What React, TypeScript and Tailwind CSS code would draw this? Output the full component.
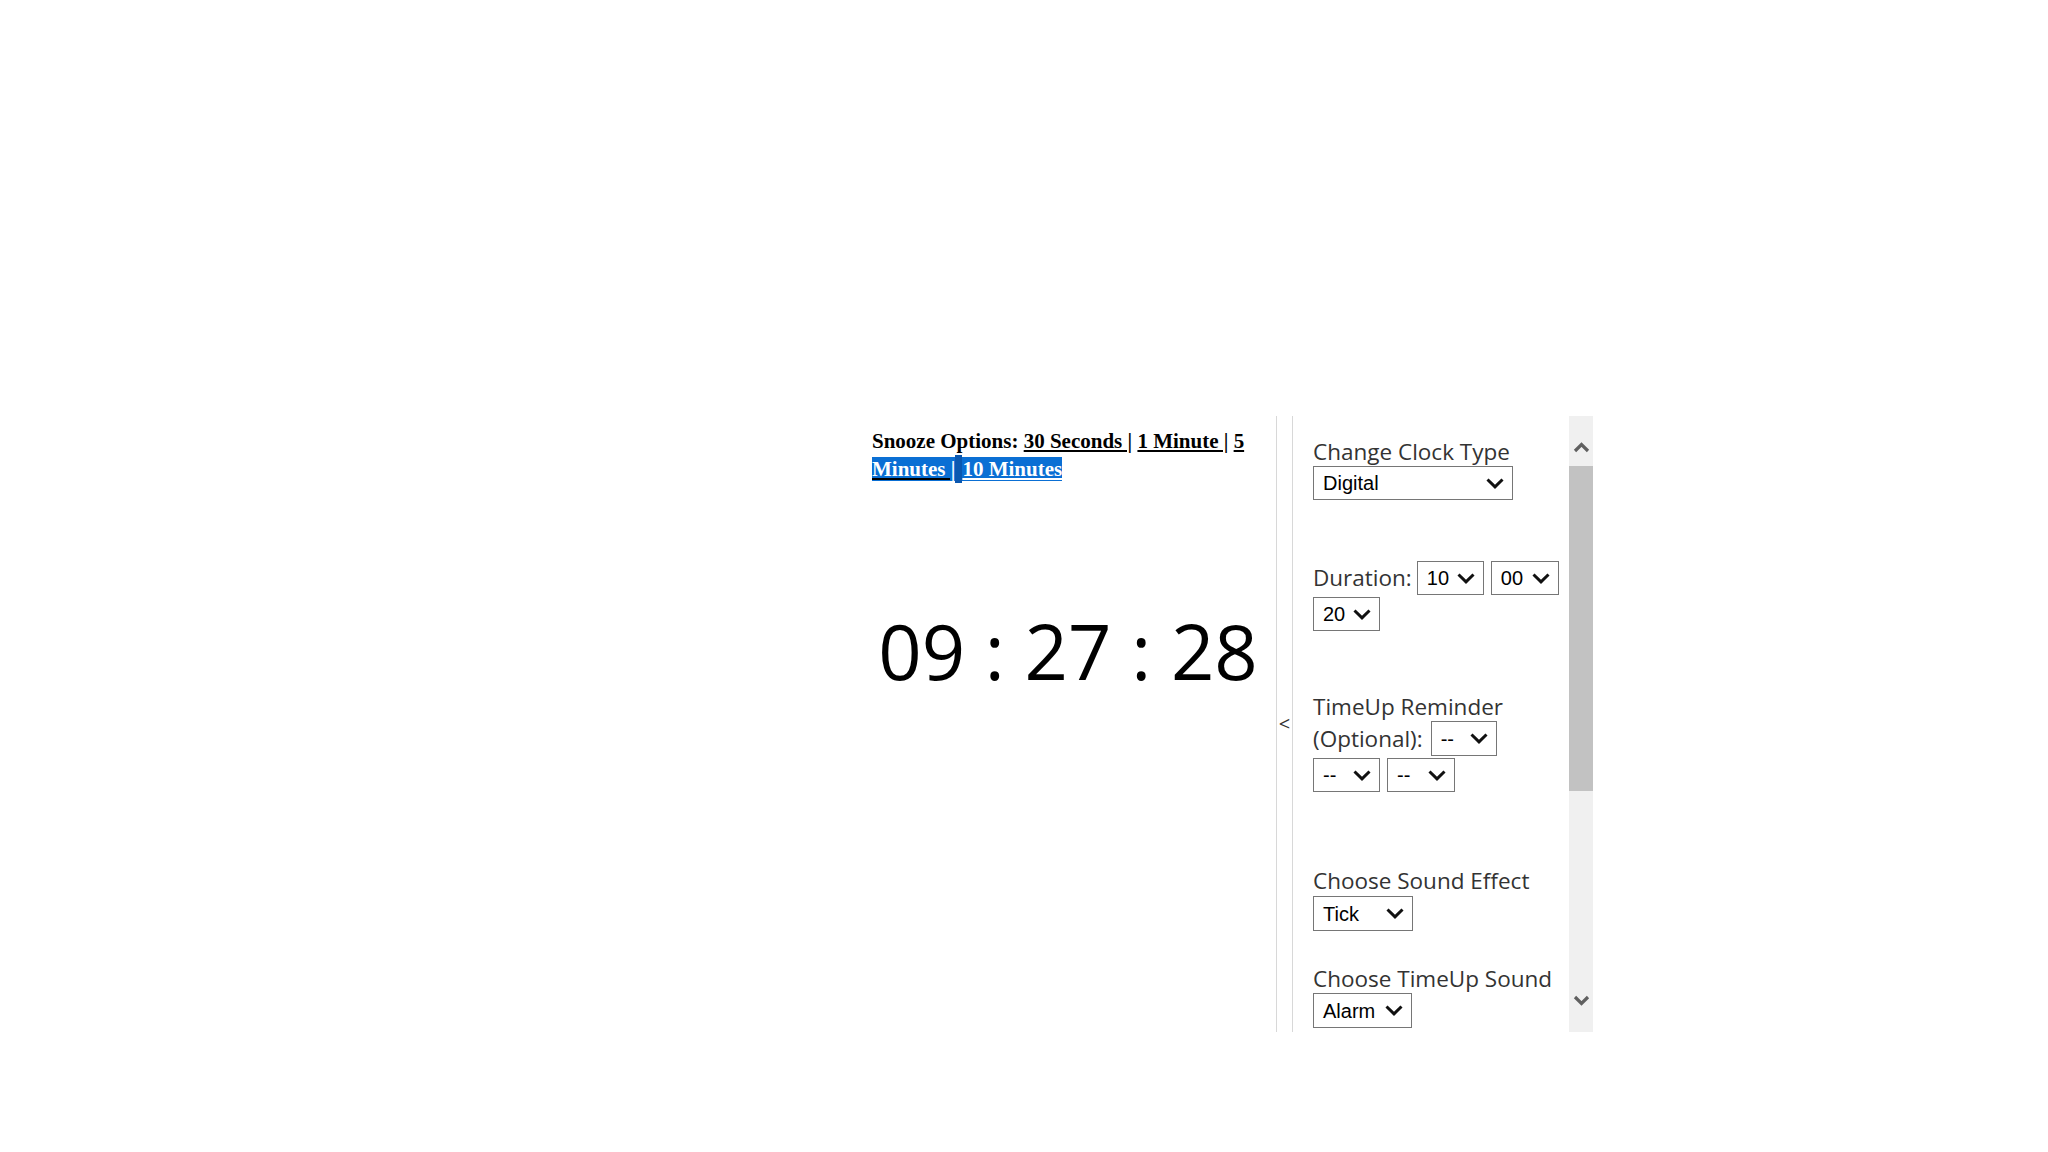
import React from 'react'

const Chevron = () => (
  <svg width="18" height="11" viewBox="0 0 18 11" className="shrink-0">
    <polyline points="1.5,1.5 9,8.8 16.5,1.5" fill="none" stroke="#111" strokeWidth="3" strokeLinejoin="miter" />
  </svg>
)

const FakeSelect = ({ value, className }: { value: string; className: string }) => (
  <div
    className={`flex items-center justify-between border border-[#767676] bg-white pl-[9px] pr-[8px] text-[20px] text-black font-['Liberation_Sans',Arial,sans-serif] ${className}`}
  >
    <span className="leading-none">{value}</span>
    <Chevron />
  </div>
)

const Label = ({ children, className = '' }: { children: React.ReactNode; className?: string }) => (
  <div className={`text-[22.5px] leading-[24px] text-[#333] whitespace-nowrap ${className}`}>{children}</div>
)

const ScrollArrow = ({ up }: { up?: boolean }) => (
  <svg width="17" height="11" viewBox="0 0 17 11">
    <polyline
      points={up ? '2,9 8.5,2.5 15,9' : '2,2 8.5,8.5 15,2'}
      fill="none"
      stroke="#606060"
      strokeWidth="3.2"
    />
  </svg>
)

const App = () => {
  return (
    <div className="min-h-screen bg-white">
      <div className="flex pt-[416px] pl-[860px]">
        {/* clock side */}
        <div className="w-[416px] h-[616px] px-3 pt-[11px]">
          <p className="m-0 text-[21px] leading-[28px] font-bold text-black font-['Liberation_Serif','Times_New_Roman',serif]">
            Snooze Options: <a className="underline">30 Seconds |</a> <a className="underline">1 Minute |</a>{' '}
            <a className="underline">
              5 <span className="bg-[#0a6fd4] text-white">Minutes |</span>
            </a>
            <span className="inline-block w-[7px] h-[28px] align-top bg-[#0b58b0]" />
            <a className="underline bg-[#0a6fd4] text-white">10 Minutes</a>
          </p>
          <div className="mt-[130px] text-center text-[76px] leading-none text-black font-['Open_Sans',sans-serif]">
            09 : 27 : 28
          </div>
        </div>

        {/* collapse handle */}
        <div className="w-[17px] h-[616px] border-x border-[#d8d8d8] flex items-center justify-center">
          <span className="text-[20px] leading-none text-[#333] font-['Open_Sans',sans-serif]">&lt;</span>
        </div>

        {/* settings side */}
        <div className="w-[300px] h-[616px] flex font-['Open_Sans',sans-serif]">
          <div className="w-[276px] h-full overflow-hidden pl-5 pt-[24px]">
            <Label>Change Clock Type</Label>
            <FakeSelect value="Digital" className="mt-[2px] w-[200px] h-[34px]" />

            <div className="mt-[61px] flex items-center gap-[5px]">
              <Label>Duration:</Label>
              <FakeSelect value="10" className="w-[67px] h-[34px]" />
              <FakeSelect value="00" className="ml-[2px] w-[68px] h-[34px]" />
            </div>
            <FakeSelect value="20" className="mt-[2px] w-[67px] h-[34px]" />

            <Label className="mt-[64px]">TimeUp Reminder</Label>
            <div className="mt-[2px] flex items-center gap-[8px]">
              <Label>(Optional):</Label>
              <FakeSelect value="--" className="w-[66px] h-[35px]" />
            </div>
            <div className="mt-[2px] flex gap-[7px]">
              <FakeSelect value="--" className="w-[67px] h-[34px]" />
              <FakeSelect value="--" className="w-[68px] h-[34px]" />
            </div>

            <Label className="mt-[77px]">Choose Sound Effect</Label>
            <FakeSelect value="Tick" className="mt-[3px] w-[100px] h-[35px]" />

            <Label className="mt-[36px]">Choose TimeUp Sound</Label>
            <FakeSelect value="Alarm" className="mt-[2px] w-[99px] h-[35px]" />
          </div>

          {/* scrollbar */}
          <div className="w-[24px] h-full bg-[#f0f0f0] flex flex-col">
            <div className="h-[50px] flex items-end justify-center pb-[13px]">
              <ScrollArrow up />
            </div>
            <div className="h-[325px] bg-[#c2c2c2]" />
            <div className="flex-1" />
            <div className="flex justify-center pb-[26px]">
              <ScrollArrow />
            </div>
          </div>
        </div>
      </div>
    </div>
  )
}

export default App
